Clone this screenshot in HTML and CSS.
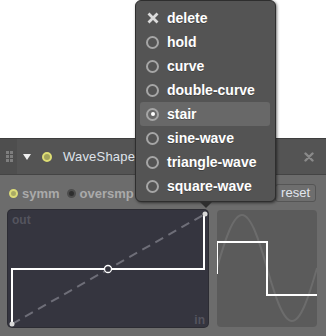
FILE: index.html
```html
<!DOCTYPE html>
<html>
<head>
<meta charset="utf-8">
<link rel="stylesheet" href="styles.css">
</head>
<body>
<div class="stage">
  <div class="panel">
    <div class="header">
      <div class="grip">
        <span></span><span></span><span></span><span></span><span></span><span></span>
      </div>
      <div class="caret"></div>
      <div class="led on"></div>
      <div class="title">WaveShaper</div>
      <div class="close">
        <svg width="10" height="10" viewBox="0 0 10 10"><path d="M1.5 1.5L8.5 8.5M8.5 1.5L1.5 8.5" stroke="#8a8a8a" stroke-width="2.4" stroke-linecap="round"/></svg>
      </div>
    </div>
    <div class="content">
      <div class="toolbar">
        <div class="toggle"><span class="dot on"></span>symm</div>
        <div class="toggle"><span class="dot off"></span>oversmp</div>
        <div class="spacer"></div>
        <div class="btn">reset</div>
      </div>
      <div class="graphs">
        <div class="curve">
          <span class="lbl out">out</span>
          <span class="lbl in">in</span>
          <svg width="200" height="117" viewBox="0 0 200 117">
            <line x1="4" y1="114" x2="197" y2="4" stroke="#6e6e78" stroke-width="2" stroke-dasharray="9 6"/>
            <polyline points="4,114 4,59 196,59 196,4" fill="none" stroke="#ffffff" stroke-width="2"/>
            <circle cx="4" cy="114" r="2.5" fill="#d8d8d8"/>
            <circle cx="197" cy="4" r="2.5" fill="#d8d8d8"/>
            <circle cx="100" cy="59" r="3.5" fill="#35353f" stroke="#ffffff" stroke-width="1.3"/>
          </svg>
        </div>
        <div class="preview">
          <svg width="100" height="117" viewBox="0 0 100 117">
            <path d="M0 58 C8 30 16 5 25 5 C34 5 42 30 50 58 C58 86 66 111 75 111 C84 111 92 86 100 58" fill="none" stroke="#6c6c6c" stroke-width="2"/>
            <polyline points="0,64 0,32 50,32 50,85 100,85" fill="none" stroke="#ffffff" stroke-width="2"/>
          </svg>
        </div>
      </div>
    </div>
  </div>

  <div class="menu">
    <div class="item"><span class="ico x"><svg width="12" height="12" viewBox="0 0 12 12"><path d="M1.5 1.5L10.5 10.5M10.5 1.5L1.5 10.5" stroke="#dcdcdc" stroke-width="2.8"/></svg></span>delete</div>
    <div class="item"><span class="ico radio"></span>hold</div>
    <div class="item"><span class="ico radio"></span>curve</div>
    <div class="item"><span class="ico radio"></span>double-curve</div>
    <div class="item sel"><span class="ico radio checked"></span>stair</div>
    <div class="item"><span class="ico radio"></span>sine-wave</div>
    <div class="item"><span class="ico radio"></span>triangle-wave</div>
    <div class="item"><span class="ico radio"></span>square-wave</div>
    <div class="tip"></div>
  </div>
</div>
</body>
</html>
```

FILE: styles.css
```css
html, body {
  margin: 0;
  padding: 0;
  background: #ffffff;
}
body {
  font-family: "Liberation Sans", Arial, sans-serif;
  width: 326px;
  height: 336px;
  overflow: hidden;
}
.stage {
  position: relative;
  width: 326px;
  height: 336px;
  padding-top: 138px;
  box-sizing: border-box;
}
.panel {
  width: 326px;
  height: 198px;
  background: #6c6c6c;
  border-top: 1px solid #3e3e3e;
}
.header {
  height: 35px;
  background: #545454;
  border-bottom: 1px solid #444;
  display: flex;
  align-items: center;
}
.grip {
  width: 17px;
  height: 35px;
  background: #4e4e4e;
  display: grid;
  grid-template-columns: 3px 3px;
  grid-template-rows: 3px 3px 3px;
  gap: 1px;
  align-content: center;
  justify-content: center;
  box-sizing: border-box;
  padding-left: 1px;
}
.grip span {
  background: #7e7e7e;
}
.caret {
  width: 0;
  height: 0;
  border-left: 4px solid transparent;
  border-right: 4px solid transparent;
  border-top: 6px solid #f0f0f0;
  margin-left: 6px;
  margin-top: 1px;
}
.led {
  width: 6px;
  height: 6px;
  border-radius: 50%;
  margin-left: 11px;
  border: 2px solid #dede74;
  background: #a3a45c;
}
.title {
  margin-left: 11px;
  font-size: 13px;
  letter-spacing: 0.2px;
  color: #dfe3ea;
  flex: 1;
}
.close {
  width: 10px;
  height: 10px;
  margin-right: 12px;
  display: flex;
}
.content {
  padding: 9px 9px 0 8px;
}
.toolbar {
  height: 18px;
  display: flex;
  align-items: center;
}
.toggle {
  display: flex;
  align-items: center;
  font-size: 13px;
  font-weight: bold;
  color: #aaaaaa;
  margin-right: 6px;
}
.dot {
  width: 5px;
  height: 5px;
  border-radius: 50%;
  margin-left: 1px;
  margin-right: 4px;
}
.dot.on {
  border: 2px solid #dcdc78;
  background: #a9aa66;
}
.dot.off {
  border: 2px solid #4c4c4c;
  background: #2e2e2e;
}
.spacer { flex: 1; }
.btn {
  height: 16px;
  line-height: 16px;
  padding: 0 5px;
  border: 1px solid #555;
  border-radius: 3px;
  background: #6e6e6e;
  color: #e2e6ee;
  font-size: 13px;
  margin-right: 1px;
}
.graphs {
  display: flex;
  gap: 9px;
  margin-top: 8px;
}
.curve {
  position: relative;
  width: 200px;
  height: 117px;
  background: #35353f;
  border-radius: 4px;
  box-shadow: 0 0 0 1px #2c2c33;
}
.curve svg, .preview svg { display: block; }
.lbl {
  position: absolute;
  font-size: 12px;
  font-weight: bold;
  color: #54545e;
}
.lbl.out { left: 4px; top: 3px; }
.lbl.in { right: 3px; bottom: 0px; }
.preview {
  width: 100px;
  height: 117px;
  background: #5b5b5b;
  border-radius: 4px;
  overflow: hidden;
}
.menu {
  position: absolute;
  left: 135px;
  top: 0;
  width: 139px;
  height: 195px;
  background: #545454;
  border: 1px solid #2e2e2e;
  border-radius: 6px;
  box-shadow: 1px 1px 3px rgba(0,0,0,0.55);
  padding: 5px 0 0 0;
  box-sizing: content-box;
}
.item {
  height: 24px;
  margin: 0 5px 0 4px;
  display: flex;
  align-items: center;
  font-size: 14px;
  font-weight: bold;
  color: #ffffff;
  border-radius: 3px;
  text-shadow: 0 1px 0 rgba(0,0,0,0.25);
}
.item.sel {
  background: #686868;
}
.ico {
  width: 13px;
  height: 13px;
  margin-left: 6px;
  margin-right: 8px;
  display: flex;
  align-items: center;
  justify-content: center;
  box-sizing: border-box;
}
.ico.radio {
  border: 2px solid #a6a6a6;
  border-radius: 50%;
}
.ico.radio.checked::after {
  content: "";
  width: 4px;
  height: 4px;
  border-radius: 50%;
  background: #ffffff;
}
.tip {
  position: absolute;
  left: 64px;
  bottom: -7px;
  width: 0;
  height: 0;
  border-left: 6px solid transparent;
  border-right: 6px solid transparent;
  border-top: 6px solid #2e2e2e;
}
```
